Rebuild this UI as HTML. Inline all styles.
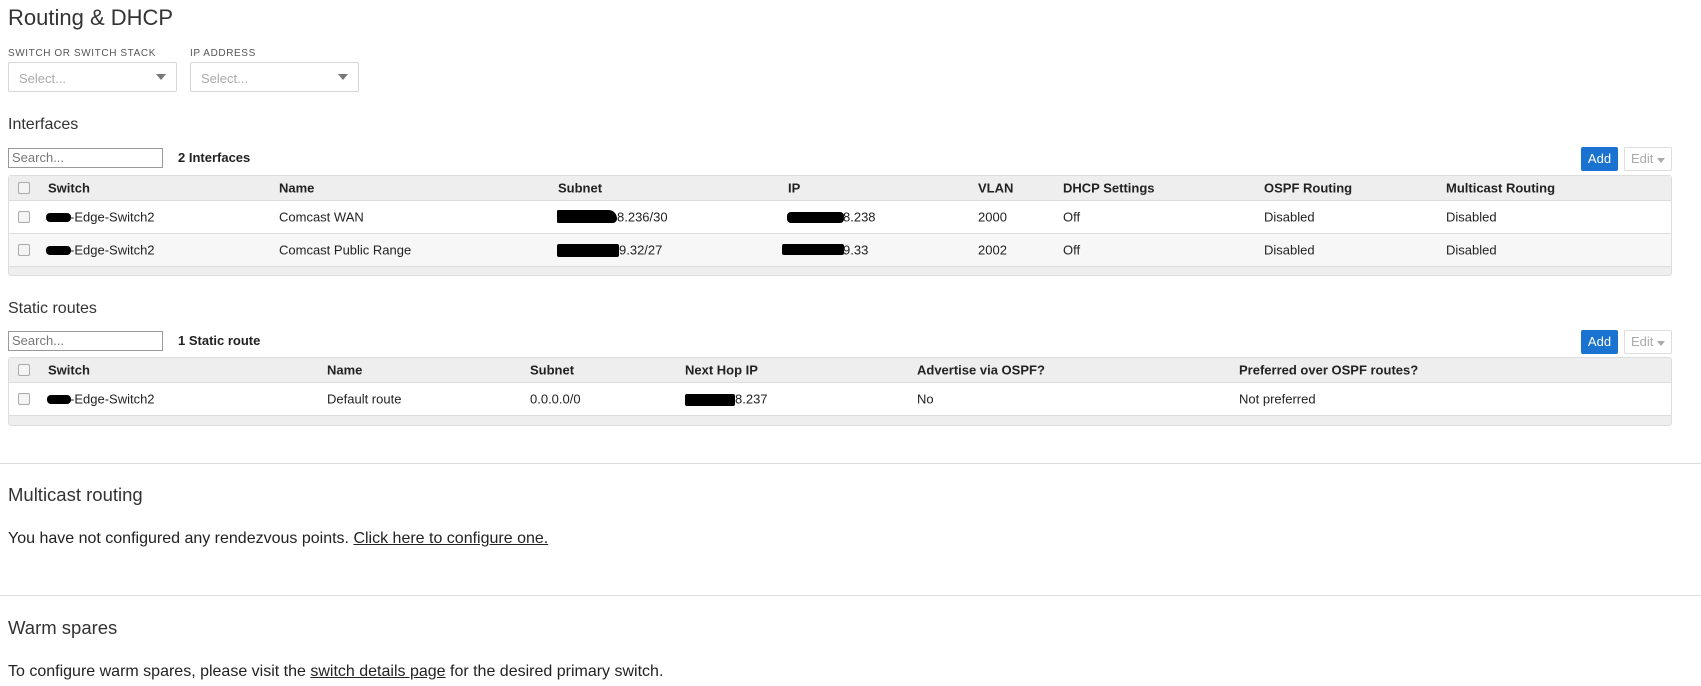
<!DOCTYPE html>
<html><head><meta charset="utf-8"><style>
*{box-sizing:border-box;margin:0;padding:0}
body{width:1701px;height:686px;background:#fff;font-family:"Liberation Sans",sans-serif;color:#222;position:relative;overflow:hidden;font-size:13px}
.a{position:absolute;white-space:nowrap}
.h{font-size:16px;color:#333;font-weight:300}
.lbl{font-size:10px;letter-spacing:.6px;color:#555}
.sel{position:absolute;border:1px solid #d6d6d6;border-radius:2px;height:30px;color:#aaa;font-size:13px;padding:8px 10px}
.sel:after{content:"";position:absolute;right:10px;top:11px;border:5px solid transparent;border-top:6px solid #777;border-bottom:0}
.search{position:absolute;border:1px solid #999;height:20px;width:155px;color:#777;padding:1px 3px;font-size:13px}
.tbl{position:absolute;left:8px;width:1664px;border:1px solid #ddd;border-radius:3px;background:#eee}
.hd{height:25px;border-bottom:1px solid #ddd;background:#eee;position:relative;font-weight:bold}
.row{height:33px;border-bottom:1px solid #ddd;position:relative;background:#fff}
.row.alt{background:#f7f7f7}
.hd span,.row span{position:absolute;top:50%;transform:translateY(-50%);white-space:nowrap}
.cb{position:absolute;left:9px;top:50%;margin-top:-6px;width:12px;height:12px;border:1px solid #aaa;border-radius:2px;background:#f4f4f4}
.blk{position:absolute;background:#000;border-radius:4px}
.add{position:absolute;left:1581px;width:37px;height:24px;background:#1a73d0;color:#fff;border-radius:2px;text-align:center;line-height:24px;font-size:13px}
.edit{position:absolute;left:1624px;width:48px;height:24px;border:1px solid #ddd;color:#aaa;border-radius:2px;line-height:22px;padding-left:6px;font-size:13px}
.edit:after{content:"";position:absolute;right:6px;top:10px;border:4px solid transparent;border-top:5px solid #aaa;border-bottom:0}
.hr{position:absolute;left:0;width:1701px;height:1px;background:#ddd}
u{text-decoration:underline}
</style></head><body>
<div class="a" style="left:8px;top:5px;font-size:22px;font-weight:300;color:#333">Routing &amp; DHCP</div>
<div class="a lbl" style="left:8px;top:48px">SWITCH OR SWITCH STACK</div>
<div class="a lbl" style="left:190px;top:48px">IP ADDRESS</div>
<div class="sel" style="left:8px;top:62px;width:169px">Select...</div>
<div class="sel" style="left:190px;top:62px;width:169px">Select...</div>

<div class="a h" style="left:8px;top:116px">Interfaces</div>
<div class="search" style="left:8px;top:148px">Search...</div>
<div class="a" style="left:178px;top:150px;font-weight:bold">2 Interfaces</div>
<div class="add" style="top:147px">Add</div><div class="edit" style="top:147px">Edit</div>
<div class="tbl" style="top:175px;height:101px">
<div class="hd"><div class="cb"></div><span style="left:39px">Switch</span><span style="left:270px">Name</span><span style="left:549px">Subnet</span><span style="left:779px">IP</span><span style="left:969px">VLAN</span><span style="left:1054px">DHCP Settings</span><span style="left:1255px">OSPF Routing</span><span style="left:1437px">Multicast Routing</span></div>
<div class="row"><div class="cb"></div><div class="blk" style="left:37px;top:12px;width:25px;height:9px"></div><span style="left:61px">-Edge-Switch2</span><span style="left:270px">Comcast WAN</span><div class="blk" style="left:548px;top:9px;width:60px;height:13px;border-radius:2px 12px 6px 2px"></div><span style="left:608px">8.236/30</span><div class="blk" style="left:778px;top:11px;width:57px;height:11px"></div><span style="left:834px">8.238</span><span style="left:969px">2000</span><span style="left:1054px">Off</span><span style="left:1255px">Disabled</span><span style="left:1437px">Disabled</span></div>
<div class="row alt"><div class="cb"></div><div class="blk" style="left:37px;top:12px;width:25px;height:9px"></div><span style="left:61px">-Edge-Switch2</span><span style="left:270px">Comcast Public Range</span><div class="blk" style="left:548px;top:10px;width:62px;height:13px;border-radius:2px"></div><span style="left:610px">9.32/27</span><div class="blk" style="left:773px;top:10px;width:62px;height:11px;border-radius:2px"></div><span style="left:834px">9.33</span><span style="left:969px">2002</span><span style="left:1054px">Off</span><span style="left:1255px">Disabled</span><span style="left:1437px">Disabled</span></div>
</div>

<div class="a h" style="left:8px;top:300px">Static routes</div>
<div class="search" style="left:8px;top:331px">Search...</div>
<div class="a" style="left:178px;top:333px;font-weight:bold">1 Static route</div>
<div class="add" style="top:330px">Add</div><div class="edit" style="top:330px">Edit</div>
<div class="tbl" style="top:357px;height:69px">
<div class="hd"><div class="cb"></div><span style="left:39px">Switch</span><span style="left:318px">Name</span><span style="left:521px">Subnet</span><span style="left:676px">Next Hop IP</span><span style="left:908px">Advertise via OSPF?</span><span style="left:1230px">Preferred over OSPF routes?</span></div>
<div class="row"><div class="cb"></div><div class="blk" style="left:38px;top:12px;width:24px;height:9px"></div><span style="left:61px">-Edge-Switch2</span><span style="left:318px">Default route</span><span style="left:521px">0.0.0.0/0</span><div class="blk" style="left:676px;top:11px;width:50px;height:12px;border-radius:2px"></div><span style="left:726px">8.237</span><span style="left:908px">No</span><span style="left:1230px">Not preferred</span></div>
</div>

<div class="hr" style="top:463px"></div>
<div class="a h" style="left:8px;top:484px;font-size:18.5px">Multicast routing</div>
<div class="a" style="left:8px;top:530px;font-size:16px">You have not configured any rendezvous points. <u>Click here to configure one.</u></div>
<div class="hr" style="top:595px"></div>
<div class="a h" style="left:8px;top:617px;font-size:18.5px">Warm spares</div>
<div class="a" style="left:8px;top:663px;font-size:16px">To configure warm spares, please visit the <u>switch details page</u> for the desired primary switch.</div>
</body></html>
